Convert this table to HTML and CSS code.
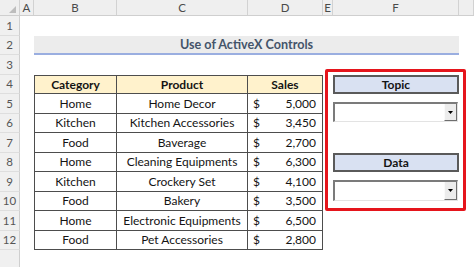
FILE: index.html
```html
<!DOCTYPE html>
<html>
<head>
<meta charset="utf-8">
<link rel="stylesheet" href="styles.css">
</head>
<body>
<div class="sheet">
  <div class="row head">
    <div class="corner"><span class="tri"></span></div>
    <div class="ch">A</div><div class="ch">B</div><div class="ch">C</div><div class="ch">D</div><div class="ch">E</div><div class="ch">F</div><div class="ch"></div>
  </div>
  <div class="row"><div class="rn">1</div></div>
  <div class="row"><div class="rn">2</div><div></div><div class="title">Use of ActiveX Controls</div></div>
  <div class="row"><div class="rn">3</div></div>
  <div class="row">
    <div class="rn">4</div><div></div>
    <div class="c th first">Category</div><div class="c th">Product</div><div class="c th">Sales</div>
    <div></div><div class="label">Topic</div>
  </div>
  <div class="row"><div class="rn">5</div><div></div><div class="c first">Home</div><div class="c">Home Decor</div><div class="c money"><span>$</span><span>5,000</span></div></div>
  <div class="row"><div class="rn">6</div><div></div><div class="c first">Kitchen</div><div class="c">Kitchen Accessories</div><div class="c money"><span>$</span><span>3,450</span></div></div>
  <div class="row"><div class="rn">7</div><div></div><div class="c first">Food</div><div class="c">Baverage</div><div class="c money"><span>$</span><span>2,700</span></div></div>
  <div class="row"><div class="rn">8</div><div></div><div class="c first">Home</div><div class="c">Cleaning Equipments</div><div class="c money"><span>$</span><span>6,300</span></div><div></div><div class="label">Data</div></div>
  <div class="row"><div class="rn">9</div><div></div><div class="c first">Kitchen</div><div class="c">Crockery Set</div><div class="c money"><span>$</span><span>4,100</span></div></div>
  <div class="row"><div class="rn">10</div><div></div><div class="c first">Food</div><div class="c">Bakery</div><div class="c money"><span>$</span><span>3,500</span></div></div>
  <div class="row"><div class="rn">11</div><div></div><div class="c first">Home</div><div class="c">Electronic Equipments</div><div class="c money"><span>$</span><span>6,500</span></div></div>
  <div class="row"><div class="rn">12</div><div></div><div class="c first">Food</div><div class="c">Pet Accessories</div><div class="c money"><span>$</span><span>2,800</span></div></div>
  <div class="row"><div class="rn"></div></div>

  <div class="redbox"></div>
  <div class="combo combo1"><span class="btn"><svg width="5" height="3" viewBox="0 0 5 3"><path d="M0 0H5L2.5 3Z" fill="#000"/></svg></span></div>
  <div class="combo combo2"><span class="btn"><svg width="5" height="3" viewBox="0 0 5 3"><path d="M0 0H5L2.5 3Z" fill="#000"/></svg></span></div>
</div>
</body>
</html>
```
FILE: styles.css
```css
* { box-sizing: border-box; }
html, body { margin: 0; padding: 0; background: #fff; }
body { width: 474px; height: 267px; overflow: hidden; font-family: Lato, "Open Sans", sans-serif; color: #141414; }
.sheet { position: relative; width: 474px; }
.row { display: grid; grid-template-columns: 20px 14px 83px 131px 75px 10px 126px 1fr; height: 19.5px; font-size: 12px; }
.row > div { display: flex; align-items: center; justify-content: center; min-width: 0; white-space: nowrap; }
.head { height: 16px; background: #efefef; border-bottom: 1px solid #cfcfcf; }
.head .ch { color: #4a4a4a; font-size: 11.5px; border-right: 1px solid #d2d2d2; }
.corner { position: relative; border-right: 1px solid #d2d2d2; }
.tri { position: absolute; right: 3px; bottom: 2px; width: 0; height: 0; border-left: 7px solid transparent; border-bottom: 7px solid #bdbdbd; }
.rn { background: #f0f0f0; border-right: 1px solid #cfcfcf; border-bottom: 1px solid #dedede; color: #555; font-size: 11.5px; }
.title { grid-column: 3 / 8; background: #ececec; border-bottom: 2px solid #9aaee0; color: #44546a; font-weight: 700; font-size: 12.6px; height: 19px; }
.c { border-right: 1px solid #4d4d4d; border-bottom: 1px solid #4d4d4d; }
.c.first { border-left: 1px solid #4d4d4d; }
.th { background: #fff2cc; border-top: 1px solid #4d4d4d; font-weight: 700; }
.row > .money { justify-content: space-between; padding: 0 6px 0 5px; }
.label { background: #d9e1f2; border: 2px solid #5a5a5a; font-weight: 700; }
.redbox { position: absolute; left: 325px; top: 69px; width: 141px; height: 142px; border: 3px solid #e5151c; border-radius: 2px; }
.combo { position: absolute; left: 333px; width: 125px; background: #fff; border-top: 2px solid #7b7b7b; border-left: 2px solid #7b7b7b; border-right: 1px solid #e3e3e3; border-bottom: 1px solid #e3e3e3; display: flex; justify-content: flex-end; }
.combo1 { top: 102px; height: 20px; }
.combo2 { top: 180px; height: 21px; }
.btn { width: 13px; height: 100%; background: #ececec; border-left: 1px solid #fafafa; border-right: 1px solid #6e6e6e; border-bottom: 1px solid #6e6e6e; display: flex; align-items: center; justify-content: center; }
```
